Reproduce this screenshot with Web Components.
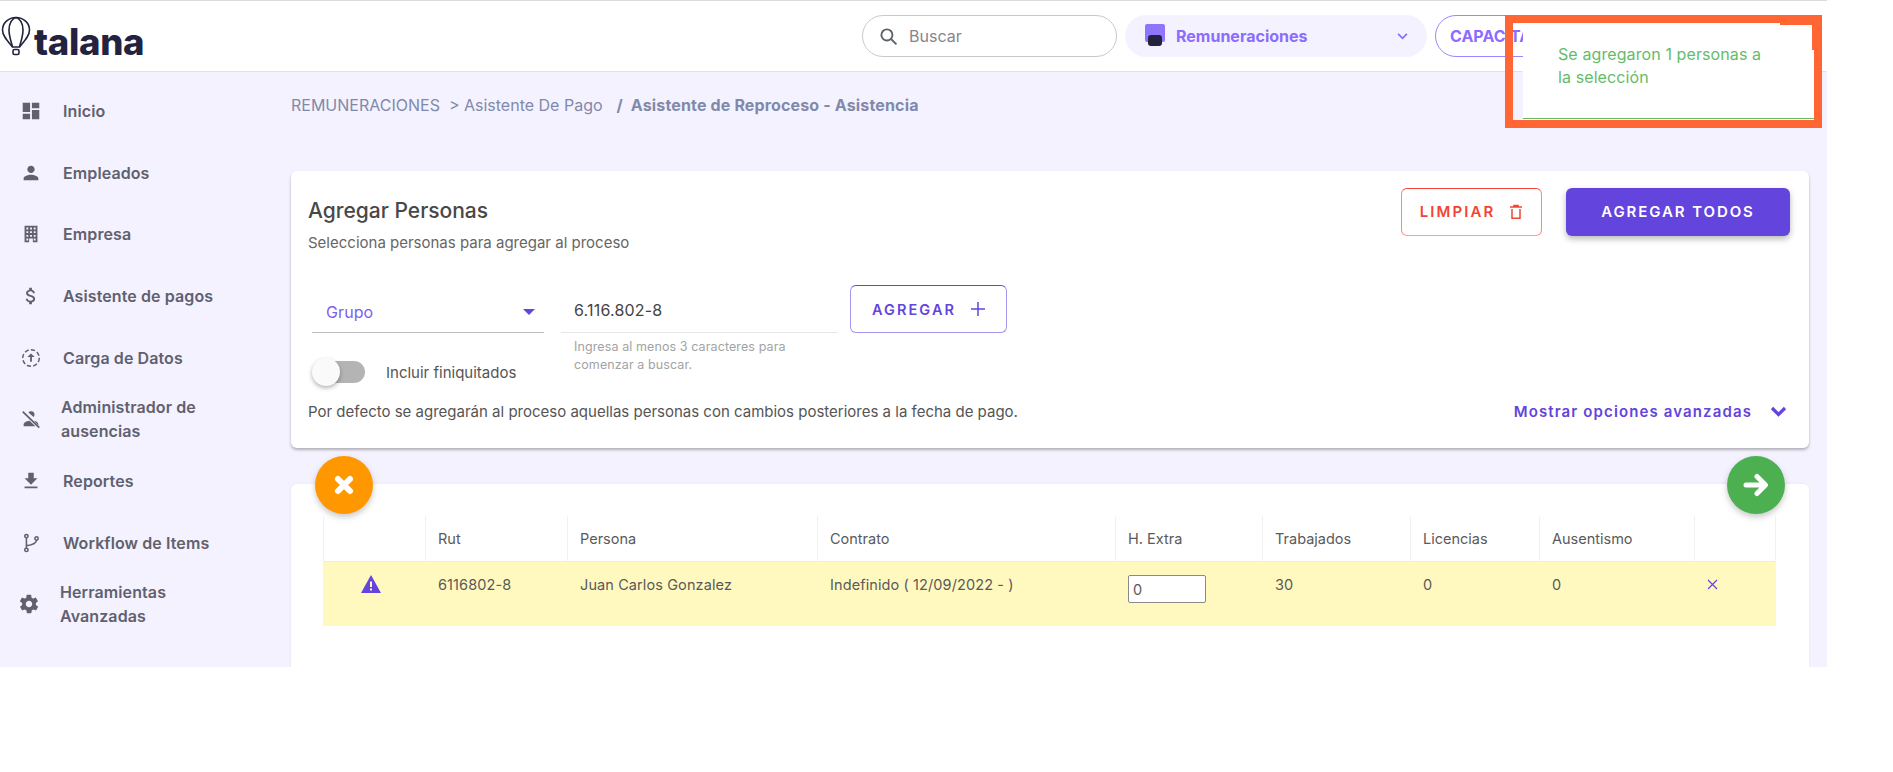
<!DOCTYPE html>
<html lang="es">
<head>
<meta charset="utf-8">
<title>Talana</title>
<style>
  html, body { margin: 0; background: #fff; }
  body { font-family: Inter, "Liberation Sans", sans-serif; }
</style>
</head>
<body>
<app-shell>
  <top-bar slot="top"></top-bar>
  <side-nav slot="side">
    <nav-item icon="dash" label="Inicio"></nav-item>
    <nav-item icon="person" label="Empleados"></nav-item>
    <nav-item icon="building" label="Empresa"></nav-item>
    <nav-item icon="dollar" label="Asistente de pagos"></nav-item>
    <nav-item icon="upload" label="Carga de Datos"></nav-item>
    <nav-item icon="absent" label="Administrador de ausencias" shift="-2"></nav-item>
    <nav-item icon="download" label="Reportes"></nav-item>
    <nav-item icon="flow" label="Workflow de Items"></nav-item>
    <nav-item icon="gear" label="Herramientas Avanzadas" shift="-3"></nav-item>
  </side-nav>
  <bread-crumb></bread-crumb>
  <add-card></add-card>
  <people-table></people-table>
  <toast-note slot="over">Se agregaron 1 personas a la selección</toast-note>
</app-shell>

<script>
// iconos del menu lateral (24x24)
const ICONS = {
  dash: '<path d="M3 13h8V3H3zm0 8h8v-6H3zm10 0h8V11h-8zm0-18v6h8V3z"/>',
  person: '<path d="M12 12c2.200 0 4-1.800 4-4s-1.800-4-4-4-4 1.800-4 4 1.800 4 4 4zm0 2c-2.700 0-8 1.300-8 4v2h16v-2c0-2.700-5.300-4-8-4z"/>',
  building: '<path fill-rule="evenodd" d="M5 3h14v18h-5v-4h-4v4H5zm2 2v2h2V5zm4 0v2h2V5zm4 0v2h2V5zM7 9v2h2V9zm4 0v2h2V9zm4 0v2h2V9zm-8 4v2h2v-2zm4 0v2h2v-2zm4 0v2h2v-2zM7 17v2h2v-2zm8 0v2h2v-2z"/>',
  dollar: '<path d="M11.800 10.900c-2.300-.6-3-1.200-3-2.100 0-1.100 1-1.900 2.700-1.900 1.800 0 2.400.8 2.500 2.100h2.200c-.1-1.700-1.200-3.300-3.200-3.800V3h-3v2.200C8.100 5.600 6.600 6.900 6.600 8.800c0 2.300 1.900 3.400 4.600 4.100 2.500.6 3 1.500 3 2.400 0 .7-.5 1.800-2.700 1.800-2.100 0-2.900-.9-3-2.100H6.300c.1 2.200 1.800 3.400 3.700 3.900V21h3v-2.100c1.900-.4 3.500-1.500 3.500-3.600 0-2.900-2.400-3.800-4.700-4.400z"/>',
  upload: '<path d="M12 7l-4 4h3v5h2v-5h3z"/><circle cx="12" cy="12" r="9" fill="none" stroke="currentColor" stroke-width="1.600" stroke-dasharray="4.600 2.400"/>',
  absent: '<path d="M12 3.500a3.800 3.800 0 0 1 3.800 3.800c0 1-.4 1.900-1 2.600L9.200 4.900C9.900 4 10.900 3.500 12 3.500zM4 20v-2c0-2.300 3-3.800 6.400-4.200L16.800 20z"/><path d="M3 4l18 17.500" stroke="currentColor" stroke-width="1.900" fill="none"/><path d="M15.300 13.800c2.600.6 4.700 1.900 4.700 4.200v1.200z"/>',
  download: '<path d="M19 9h-4V3H9v6H5l7 7zM5 18v2h14v-2z"/>',
  flow: '<g fill="none" stroke="currentColor" stroke-width="1.700"><circle cx="7" cy="4.500" r="1.800"/><circle cx="7" cy="19.500" r="1.800"/><circle cx="18" cy="7" r="1.800"/><path d="M7 6.300v11.400M18 8.800c0 3.500-3 5.200-11 6.200"/></g>',
  gear: '<path d="M19.400 13c.1-.3.100-.7.100-1s0-.7-.1-1l2.100-1.600c.2-.2.200-.4.100-.6l-2-3.500c-.1-.2-.4-.3-.6-.2l-2.500 1c-.5-.4-1.100-.7-1.700-1l-.4-2.600c0-.3-.2-.5-.5-.5h-4c-.2 0-.4.200-.5.400l-.4 2.700c-.6.300-1.200.6-1.700 1l-2.500-1c-.2-.100-.5 0-.6.200l-2 3.500c-.1.200-.1.500.1.600L4.600 11c-.1.300-.1.700-.1 1s0 .7.1 1l-2.100 1.600c-.2.200-.2.400-.1.600l2 3.500c.1.200.4.300.6.200l2.500-1c.5.400 1.100.7 1.700 1l.4 2.600c.1.300.3.500.5.500h4c.3 0 .5-.2.500-.4l.4-2.700c.6-.3 1.200-.6 1.700-1l2.500 1c.2.100.5 0 .6-.2l2-3.500c.1-.2.100-.5-.1-.6zM12 15.500c-1.900 0-3.500-1.600-3.500-3.500s1.600-3.500 3.500-3.500 3.500 1.600 3.500 3.500-1.600 3.500-3.500 3.500z"/>'
};

class AppShell extends HTMLElement {
  constructor() {
    super();
    this.attachShadow({ mode: "open" }).innerHTML = `
      <style>
        :host { display: block; position: relative; width: 1827px; height: 667px; overflow: hidden; background: #f4f2fe; border-top: 1px solid #dcdcdc; box-sizing: border-box; }
        .body { display: grid; grid-template-columns: 291px 1518px; height: 595px; }
        main { display: flex; flex-direction: column; min-width: 0; }
      </style>
      <slot name="top"></slot>
      <div class="body">
        <slot name="side"></slot>
        <main><slot></slot></main>
      </div>
      <slot name="over"></slot>
    `;
  }
}

class TopBar extends HTMLElement {
  constructor() {
    super();
    this.attachShadow({ mode: "open" }).innerHTML = `
      <style>
        :host { display: flex; align-items: center; height: 71px; box-sizing: border-box; background: #fff; border-bottom: 1px solid #e2e1e8; padding: 0 0 0 1px; }
        .logo { display: flex; align-items: flex-end; width: 861px; height: 40px; margin-top: -1px; }
        .logo span { font: 800 36.500px/33px Inter, sans-serif; color: #23233f; margin-left: 3px; letter-spacing: -.3px; position: relative; top: 3px; }
        .search { width: 255px; height: 42px; box-sizing: border-box; border: 1px solid #c9c9c9; border-radius: 21px; display: flex; align-items: center; padding-left: 16px; gap: 11px; font-size: 16px; color: #85858c; }
        .module { width: 302px; height: 42px; margin-left: 8px; box-sizing: border-box; background: #f4f2fe; border-radius: 21px; display: flex; align-items: center; padding: 0 19px 0 20px; font-size: 16px; color: #8b6cff; }
        .module b { font-weight: 700; margin-left: 11px; flex: 1; }
        .cube { position: relative; width: 20px; height: 22px; margin-top: -3px; }
        .cube::before { content: ""; position: absolute; left: 0; top: 0; width: 20px; height: 18px; background: #8f75fb; border-radius: 2px; }
        .cube::after { content: ""; position: absolute; left: 3px; top: 11px; width: 14px; height: 11px; background: #23233f; border-radius: 3px; }
        .pill { width: 340px; height: 42px; margin-left: 8px; box-sizing: border-box; border: 1px solid #9b86ff; border-radius: 21px; display: flex; align-items: center; padding-left: 14px; font-size: 16px; font-weight: 700; color: #8b6cff; }
      </style>
      <div class="logo">
        <svg width="30" height="40" viewBox="0 0 30 40" fill="none" stroke="#23233f" stroke-width="1.600">
          <path d="M15 1.500C7.500 1.500 1.500 7 1.500 14c0 6 5 11 10 17h7c5-6 10-11 10-17 0-7-6-12.500-13.500-12.500z"/>
          <path d="M15 1.500c-4 1-7 6-7 12.500 0 6 2 11 3.500 17M15 1.500c4 1 7 6 7 12.500 0 6-2 11-3.500 17"/>
          <rect x="12" y="33.500" width="6" height="5" rx="1.500"/>
        </svg>
        <span>talana</span>
      </div>
      <div class="search">
        <svg width="19" height="19" viewBox="0 0 24 24" fill="none" stroke="#5f6368" stroke-width="2.400"><circle cx="10" cy="10" r="7"/><path d="M15.500 15.500L22 22"/></svg>
        Buscar
      </div>
      <div class="module">
        <span class="cube"></span><b>Remuneraciones</b>
        <svg width="11" height="7" viewBox="0 0 12 8" fill="none" stroke="#8b6cff" stroke-width="2"><path d="M1 1l5 5 5-5"/></svg>
      </div>
      <div class="pill">CAPACITACIÓN</div>
    `;
  }
}

class SideNav extends HTMLElement {
  constructor() {
    super();
    this.attachShadow({ mode: "open" }).innerHTML = `
      <style>
        :host { display: grid; grid-auto-rows: 61.700px; padding-top: 8px; align-content: start; }
      </style>
      <slot></slot>
    `;
  }
}

class NavItem extends HTMLElement {
  connectedCallback() {
    const shift = Number(this.getAttribute("shift") || 0);
    this.attachShadow({ mode: "open" }).innerHTML = `
      <style>
        :host { display: flex; align-items: center; padding-left: ${19 + (shift < -2 ? -2 : 0)}px; font-size: 16px; font-weight: 600; line-height: 24px; color: #60606f; letter-spacing: .1px; }
        svg { width: 24px; height: 24px; flex: none; fill: currentColor; transform: scale(.92); }
        span { margin-left: ${20 + shift + (shift < -2 ? 2 : 0)}px; width: 170px; }
      </style>
      <svg viewBox="0 0 24 24">${ICONS[this.getAttribute("icon")]}</svg>
      <span>${this.getAttribute("label")}</span>
    `;
  }
}

class BreadCrumb extends HTMLElement {
  constructor() {
    super();
    this.attachShadow({ mode: "open" }).innerHTML = `
      <style>
        :host { display: flex; align-items: center; height: 66px; padding-bottom: 1px; box-sizing: border-box; font-size: 16px; color: #8189ab; margin-bottom: 33px; white-space: pre; }
        b { font-weight: 700; letter-spacing: .15px; margin-left: 1px; }
        b i { font-style: normal; margin-right: 4px; }
      </style>
      <span>REMUNERACIONES  &gt; Asistente De Pago  </span><b> <i>/</i> Asistente de Reproceso - Asistencia</b>
    `;
  }
}

class AddCard extends HTMLElement {
  constructor() {
    super();
    this.attachShadow({ mode: "open" }).innerHTML = `
      <style>
        :host { display: block; height: 277px; box-sizing: border-box; background: #fff; border-radius: 6px; box-shadow: 0 2px 3px rgba(0,0,0,.28); padding: 17px 19px 0 17px; color: #555; position: relative; }
        .head { display: flex; height: 102px; }
        .head .t { flex: 1; }
        h2 { margin: 10px 0 0; font-size: 21px; font-weight: 500; line-height: 26px; color: #484848; }
        p { margin: 9px 0 0; font-size: 15px; line-height: 20px; color: #666; }
        button { font-family: inherit; box-sizing: border-box; background: #fff; display: flex; align-items: center; justify-content: center; }
        .clear { width: 141px; height: 48px; border: 1px solid #f88a84; border-top-color: #f44336; border-bottom-color: #ff9d98; border-radius: 6px; color: #f44336; font-size: 15px; font-weight: 600; letter-spacing: 2.100px; gap: 14px; padding-bottom: 2px; }
        .all { width: 224px; height: 48px; margin-left: 24px; border: 0; border-radius: 6px; background: #6344dc; color: #fff; font-size: 15px; font-weight: 600; letter-spacing: 1.900px; box-shadow: 0 3px 6px rgba(0,0,0,.28); padding-bottom: 2px; }
        .form { display: grid; grid-template-columns: 232px 277px auto; column-gap: 17px; padding-left: 4px; margin-top: -5px; }
        .sel { height: 48px; box-sizing: border-box; border-bottom: 1px solid #bdbdbd; display: flex; align-items: center; justify-content: space-between; padding: 6px 9px 0 14px; font-size: 16px; letter-spacing: .1px; color: #7c5ff0; }
        .sel i { width: 0; height: 0; border: 6px solid transparent; border-top: 6px solid #6344dc; border-bottom: 0; }
        .inp { height: 48px; box-sizing: border-box; border-bottom: 1px solid #e6e6e6; padding: 14px 0 0 13px; font-size: 16px; line-height: 22px; letter-spacing: .2px; color: #444; }
        .add { width: 157px; height: 48px; margin-left: -5px; border: 1px solid #a495ee; border-top-color: #6344dc; border-radius: 6px; color: #6344dc; font-size: 14.500px; font-weight: 600; letter-spacing: 2.100px; gap: 15px; }
        .help { font-size: 12.500px; line-height: 18px; color: #a3a3a3; padding: 5px 0 0 13px; letter-spacing: .1px; }
        .sw { display: flex; align-items: center; margin-top: 25px; height: 28px; font-size: 15px; color: #555; }
        .track { position: relative; width: 46px; height: 22px; margin-left: 7px; background: #b4b4b4; border-radius: 11px; }
        .knob { position: absolute; left: -7px; top: -3px; width: 28px; height: 28px; border-radius: 50%; background: #fafafa; box-shadow: 0 2px 4px rgba(0,0,0,.3); }
        .sw span { margin-left: 21px; }
        .foot { display: flex; justify-content: space-between; align-items: center; margin-top: 13px; height: 24px; font-size: 15px; color: #555; }
        .more { display: flex; align-items: center; gap: 18px; color: #6344dc; font-weight: 600; letter-spacing: 1.120px; padding-right: 3px; }
      </style>
      <div class="head">
        <div class="t">
          <h2>Agregar Personas</h2>
          <p>Selecciona personas para agregar al proceso</p>
        </div>
        <button class="clear">LIMPIAR
          <svg width="14" height="16" viewBox="0 0 14 16" fill="none" stroke="#f44336" stroke-width="1.500"><path d="M3 5v9.200h8V5M1 3h12M5 3V1.500h4V3"/></svg>
        </button>
        <button class="all">AGREGAR TODOS</button>
      </div>
      <div class="form">
        <div class="sel">Grupo<i></i></div>
        <div class="inp">6.116.802-8</div>
        <button class="add">AGREGAR
          <svg width="14" height="14" viewBox="0 0 14 14" stroke="#6344dc" stroke-width="1.500"><path d="M7 0v14M0 7h14"/></svg>
        </button>
        <div class="sw"><div class="track"><div class="knob"></div></div><span>Incluir finiquitados</span></div>
        <div class="help">Ingresa al menos 3 caracteres para comenzar a buscar.</div>
      </div>
      <div class="foot">
        <span>Por defecto se agregarán al proceso aquellas personas con cambios posteriores a la fecha de pago.</span>
        <span class="more">Mostrar opciones avanzadas
          <svg width="17" height="11" viewBox="0 0 16 11" fill="none" stroke="#6344dc" stroke-width="3.200"><path d="M1.500 2l6.500 6.500L14.500 2"/></svg>
        </span>
      </div>
    `;
  }
}

class PeopleTable extends HTMLElement {
  constructor() {
    super();
    const cols = ["", "Rut", "Persona", "Contrato", "H. Extra", "Trabajados", "Licencias", "Ausentismo", ""];
    this.attachShadow({ mode: "open" }).innerHTML = `
      <style>
        :host { display: block; position: relative; margin-top: 36px; height: 240px; background: #fff; border-radius: 6px 6px 0 0; box-shadow: 0 0 3px rgba(0,0,0,.06); padding: 32px 33px 0 32px; box-sizing: border-box; }
        .grid { display: grid; grid-template-columns: 103px 142px 250px 298px 147px 148px 129px 155px 81px; font-size: 14.500px; color: #5a5a5a; }
        .h { height: 46px; box-sizing: border-box; display: flex; align-items: center; padding-left: 12px; border-right: 1px solid #f1f1f1; border-bottom: 1px solid #ececec; }
        .h:first-child { border-left: 1px solid #f1f1f1; }
        .c { height: 64px; box-sizing: border-box; background: #fff9c0; padding: 13px 0 0 12px; line-height: 20px; letter-spacing: .1px; }
        .ico { padding: 13px 0 0 38px; }
        .box { width: 78px; height: 28px; box-sizing: border-box; background: #fff; border: 1px solid #8a8a8a; border-radius: 2px; padding: 4px 0 0 4px; line-height: 20px; }
        .fab { position: absolute; top: -28px; width: 58px; height: 58px; border-radius: 50%; display: flex; align-items: center; justify-content: center; box-shadow: 0 3px 6px rgba(0,0,0,.22); }
        .o { left: 24px; background: #ff9800; }
        .g { right: 24px; background: #4caf50; }
      </style>
      <div class="fab o"><svg width="22" height="22" viewBox="0 0 22 22" stroke="#fff" stroke-width="6" stroke-linecap="round"><path d="M5 5l12 12M17 5L5 17"/></svg></div>
      <div class="fab g"><svg width="26" height="26" viewBox="0 0 26 26" fill="none" stroke="#fff" stroke-width="5" stroke-linecap="round" stroke-linejoin="round"><path d="M3 13h18M14 4.500l8.500 8.500-8.500 8.500"/></svg></div>
      <div class="grid">
        ${cols.map((c) => `<div class="h">${c}</div>`).join("")}
        <div class="c ico"><svg width="20" height="18" viewBox="0 0 20 18"><path fill="#6344dc" d="M10 0l10 18H0z"/><path fill="#fff9c0" d="M9 6.500h2v5.500H9zM9 13.500h2v2H9z"/></svg></div>
        <div class="c">6116802-8</div>
        <div class="c">Juan Carlos Gonzalez</div>
        <div class="c">Indefinido ( 12/09/2022 - )</div>
        <div class="c"><div class="box">0</div></div>
        <div class="c">30</div>
        <div class="c">0</div>
        <div class="c">0</div>
        <div class="c"><svg width="11" height="11" viewBox="0 0 11 11" stroke="#6344dc" stroke-width="1.200" style="margin-top:4px"><path d="M1 1l9 9M10 1l-9 9"/></svg></div>
      </div>
    `;
  }
}

class ToastNote extends HTMLElement {
  constructor() {
    super();
    this.attachShadow({ mode: "open" }).innerHTML = `
      <style>
        :host { position: absolute; left: 1505px; top: 14px; width: 317px; height: 113px; box-sizing: border-box; border: 8px solid #ff6633; display: block; }
        .note { position: relative; margin-left: 10px; height: 96px; box-sizing: border-box; background: #fff; border-bottom: 1px solid #66bb6a; padding: 20px 45px 0 35px; font-size: 16px; line-height: 23px; letter-spacing: .1px; color: #66bb6a; }
        .note::after { content: ""; position: absolute; right: 0; top: 0; width: 34px; height: 2px; background: #ff6633; }
        .note::before { content: ""; position: absolute; right: 0; top: 0; width: 2px; height: 27px; background: #ff6633; }
      </style>
      <div class="note"><slot></slot></div>
    `;
  }
}

customElements.define("app-shell", AppShell);
customElements.define("top-bar", TopBar);
customElements.define("side-nav", SideNav);
customElements.define("nav-item", NavItem);
customElements.define("bread-crumb", BreadCrumb);
customElements.define("add-card", AddCard);
customElements.define("people-table", PeopleTable);
customElements.define("toast-note", ToastNote);
</script>
</body>
</html>
